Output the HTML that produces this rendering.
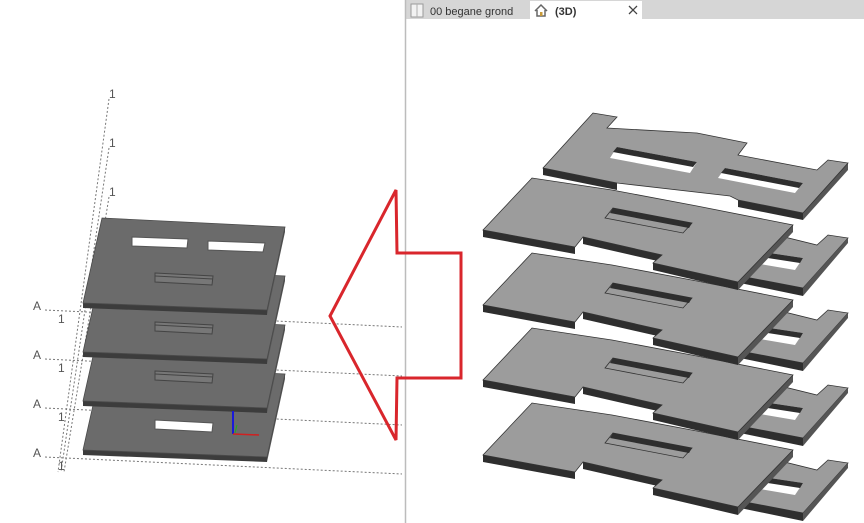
<!DOCTYPE html>
<html><head><meta charset="utf-8"><style>
html,body{margin:0;padding:0;background:#fff;width:864px;height:523px;overflow:hidden;font-family:"Liberation Sans",sans-serif}
</style></head><body>
<svg width="864" height="523" viewBox="0 0 864 523" xmlns="http://www.w3.org/2000/svg" font-family="Liberation Sans, sans-serif">
<rect width="864" height="523" fill="#fff"/>
<rect x="405" y="0" width="459" height="19" fill="#d6d6d6"/>
<rect x="530" y="1" width="112" height="19" fill="#fff"/>
<rect x="411" y="4" width="12" height="13" fill="#f2f2f2" stroke="#9a9a9a" stroke-width="1"/>
<line x1="417" y1="4" x2="417" y2="17" stroke="#b0b0b0"/>
<text x="430" y="15" font-size="11" fill="#333">00 begane grond</text>
<path d="M535 11 L541 5 L547 11 M537 10 V16 H545 V10" fill="none" stroke="#666" stroke-width="1.5"/>
<rect x="540" y="12" width="2.5" height="4" fill="#c79a3a"/>
<text x="555" y="15" font-size="11" font-weight="bold" fill="#333">(3D)</text>
<path d="M629 6 L637 14 M637 6 L629 14" stroke="#444" stroke-width="1.3"/>
<line x1="405.5" y1="0" x2="405.5" y2="523" stroke="#bcbcbc" stroke-width="1.5"/>

<g stroke="#777" stroke-width="1" stroke-dasharray="2,2" fill="none">
<line x1="109" y1="99" x2="58" y2="472"/>
<line x1="109" y1="148" x2="61" y2="472"/>
<line x1="109" y1="197" x2="64" y2="472"/>
<line x1="45" y1="310" x2="402" y2="327"/>
<line x1="45" y1="359" x2="402" y2="376"/>
<line x1="45" y1="408" x2="402" y2="425"/>
<line x1="45" y1="457" x2="402" y2="474"/>
</g>
<g font-size="12" fill="#555">
<text x="109" y="98">1</text><text x="109" y="147">1</text><text x="109" y="196">1</text>
<text x="33" y="310">A</text><text x="33" y="359">A</text><text x="33" y="408">A</text><text x="33" y="457">A</text>
<text x="58" y="323">1</text><text x="58" y="372">1</text><text x="58" y="421">1</text><text x="58" y="470">1</text>
</g>

<g transform="translate(0,147)">
<polygon points="83,303 267,310 267,315 83,308" fill="#3c3c3c"/>
<polygon points="267,310 285,227 285,232 267,315" fill="#555"/>
<polygon points="102,218 285,227 267,310 83,303" fill="#6b6b6b" stroke="#4a4a4a" stroke-width="0.8"/>
<polygon points="155,273 213,276 212,285 155,282" fill="#fff" stroke="#555"/>
</g>
<g transform="translate(0,98)">
<polygon points="83,303 267,310 267,315 83,308" fill="#3c3c3c"/>
<polygon points="267,310 285,227 285,232 267,315" fill="#555"/>
<polygon points="102,218 285,227 267,310 83,303" fill="#6b6b6b" stroke="#4a4a4a" stroke-width="0.8"/>
<polygon points="155,273 213,276 212,285 155,282" fill="#777" stroke="#444"/>
<line x1="155" y1="276" x2="213" y2="279" stroke="#444"/>
</g>
<g transform="translate(0,49)">
<polygon points="83,303 267,310 267,315 83,308" fill="#3c3c3c"/>
<polygon points="267,310 285,227 285,232 267,315" fill="#555"/>
<polygon points="102,218 285,227 267,310 83,303" fill="#6b6b6b" stroke="#4a4a4a" stroke-width="0.8"/>
<polygon points="155,273 213,276 212,285 155,282" fill="#777" stroke="#444"/>
<line x1="155" y1="276" x2="213" y2="279" stroke="#444"/>
</g>
<g>
<polygon points="83,303 267,310 267,315 83,308" fill="#3c3c3c"/>
<polygon points="267,310 285,227 285,232 267,315" fill="#555"/>
<polygon points="102,218 285,227 267,310 83,303" fill="#6b6b6b" stroke="#4a4a4a" stroke-width="0.8"/>
<polygon points="132,237 188,239 187,248 132,246" fill="#fff" stroke="#555"/>
<polygon points="208,241 265,243 263,252 208,250" fill="#fff" stroke="#555"/>
<polygon points="155,273 213,276 212,285 155,282" fill="#777" stroke="#444"/>
<line x1="155" y1="276" x2="213" y2="279" stroke="#444"/>
</g>
<line x1="233" y1="411" x2="233" y2="434" stroke="#1a1adb" stroke-width="2"/>
<line x1="233" y1="434" x2="259" y2="435" stroke="#d02020" stroke-width="1.5"/>
<line x1="235" y1="433" x2="237" y2="425" stroke="#2a2" stroke-width="1"/>

<polygon points="330,316 396,190 397,253 461,253 461,378 397,378 396,440" fill="none" stroke="#d9262c" stroke-width="3" stroke-linejoin="miter"/>

<defs>
<g id="rs">
<polygon points="740,226 817,245 828,235 848,238 803,288 740,276" fill="#9c9c9c" stroke="#333" stroke-width="0.8"/>
<polygon points="803,288 848,238 848,243 803,296" fill="#555"/>
<polygon points="740,276 803,288 803,296 740,283" fill="#2e2e2e"/>
<polygon points="763,252 803,258 795,270 760,264" fill="#fff"/>
<polygon points="763,252 803,258 800,263 761,257" fill="#2e2e2e"/>
<polygon points="483,237 575,254 575,247 483,230" fill="#2e2e2e"/>
<polygon points="583,237 662,255 662,262 583,244" fill="#2e2e2e"/>
<polygon points="653,263 738,282 738,290 653,270" fill="#2e2e2e"/>
<polygon points="738,282 793,225 793,232 738,290" fill="#555"/>
<polygon points="483,230 532,178 612,190 697,206 793,225 738,282 653,263 662,255 583,237 575,247" fill="#9c9c9c" stroke="#333" stroke-width="0.8"/>
<polygon points="613,208 692,223 683,233 605,218" fill="#9c9c9c" stroke="#333" stroke-width="0.8"/>
<polygon points="613,208 692,223 689,228 610,213" fill="#2e2e2e"/>
</g>
</defs>
<use href="#rs" transform="translate(0,225)"/>
<use href="#rs" transform="translate(0,150)"/>
<use href="#rs" transform="translate(0,75)"/>
<use href="#rs"/>
<polygon points="543,168 617,183 617,190 543,175" fill="#2e2e2e"/>
<polygon points="803,213 848,163 848,170 803,220" fill="#555"/>
<polygon points="738,200 803,213 803,220 738,207" fill="#2e2e2e"/>
<polygon points="543,168 593,113 617,117 607,128 697,133 747,143 738,155 817,170 828,160 848,163 803,213 738,200 730,196 617,183" fill="#9c9c9c" stroke="#333" stroke-width="0.8"/>
<polygon points="617,147 697,162 690,173 610,158" fill="#fff"/>
<polygon points="617,147 697,162 693,167 613,152" fill="#2e2e2e"/>
<polygon points="725,168 803,183 795,193 718,178" fill="#fff"/>
<polygon points="725,168 803,183 799,188 721,173" fill="#2e2e2e"/>
</svg>
</body></html>
